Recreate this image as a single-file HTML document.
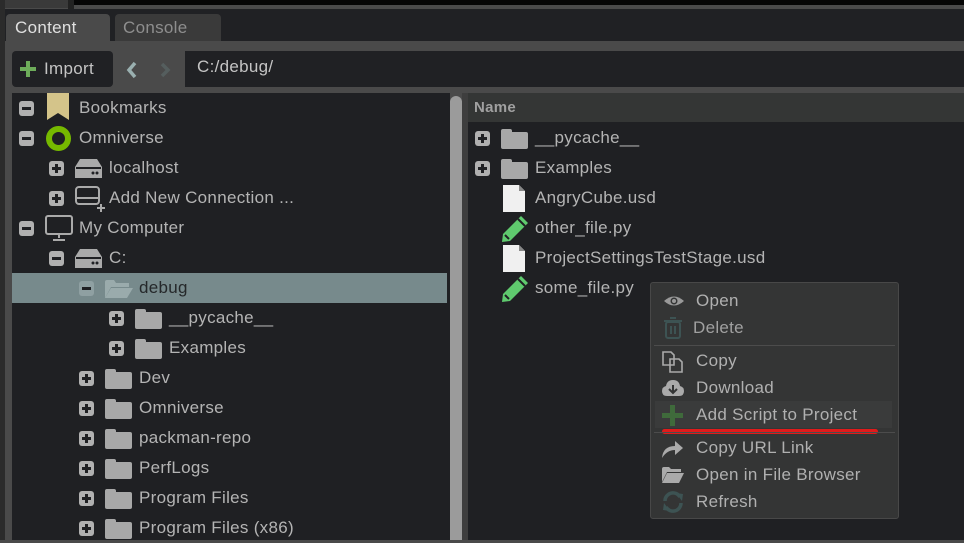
<!DOCTYPE html>
<html><head><style>
*{margin:0;padding:0;box-sizing:border-box}
body{width:964px;height:540px;overflow:hidden;background:#4a4a4a;font-family:"Liberation Sans",sans-serif;color:#b4b4b4;position:relative;font-size:17px;letter-spacing:0.3px}
.a{position:absolute}
.row{position:absolute;height:30px;line-height:30px;white-space:nowrap}
.pm{position:absolute;width:15px;height:15px;background:#b0b0b0;border-radius:3px;top:8px}
.pm:before{content:"";position:absolute;left:3px;top:6px;width:9px;height:3px;background:#1f2023}
.pm.p:after{content:"";position:absolute;left:6px;top:3px;width:3px;height:9px;background:#1f2023}
.fold{position:absolute;width:27px;height:20px;top:6px}
.fold:before{content:"";position:absolute;left:0;top:0;width:11px;height:5px;background:#a8a8a8;border-radius:2px 2px 0 0}
.fold:after{content:"";position:absolute;left:0;top:3px;width:27px;height:17px;background:#a8a8a8;border-radius:2px}
.t{position:absolute}
.mi{position:absolute;left:0;width:248px;height:27px;line-height:27px;font-size:17px;color:#b0b0b0}
.mi span{position:absolute;left:45px}
</style></head><body>
<div class="a" style="left:0;top:0;width:68px;height:8px;background:#3a3a3a"></div>
<div class="a" style="left:68px;top:0;width:6px;height:9px;background:#222"></div>
<div class="a" style="left:74px;top:0;width:890px;height:5px;background:#050505"></div>
<div class="a" style="left:0;top:0;width:5px;height:540px;background:#2b2b2b"></div>
<div class="a" style="left:5px;top:9px;width:959px;height:32px;background:#202124"></div>
<div class="a" style="left:6px;top:14px;width:104px;height:28px;background:#4a4a4a;border-radius:4px 4px 0 0;color:#e0e0e0;padding-left:9px;line-height:28px">Content</div>
<div class="a" style="left:115px;top:14px;width:106px;height:27px;background:#3a3a3a;border-radius:4px 4px 0 0;color:#8e8e8e;padding-left:8px;line-height:27px">Console</div>
<div class="a" style="left:12px;top:51px;width:101px;height:36px;background:#202124;border-radius:4px;line-height:36px;padding-left:32px;color:#c4c4c4">Import</div>
<div class="a" style="left:20px;top:67px;width:16px;height:4px;background:#6dac5a"></div>
<div class="a" style="left:26px;top:61px;width:4px;height:16px;background:#6dac5a"></div>
<svg class="a" style="left:124px;top:60px" width="50" height="20"><path d="M11 3 L5 10 L11 17" stroke="#9ab0b0" stroke-width="3.5" fill="none"/><path d="M38 4 L44 10 L38 16" stroke="#555e5e" stroke-width="3.5" fill="none"/></svg>
<div class="a" style="left:185px;top:51px;width:779px;height:36px;background:#202124;line-height:32px;padding-left:12px;color:#c4c4c4">C:/debug/</div>
<div class="a" style="left:12px;top:93px;width:438px;height:447px;background:#1f2023"></div>
<div class="a" style="left:450px;top:96px;width:12px;height:444px;background:#9b9b9b;border-radius:6px 6px 0 0"></div>
<div class="a" style="left:462px;top:93px;width:6px;height:447px;background:#3e3e3e"></div>
<div class="a" style="left:468px;top:93px;width:496px;height:447px;background:#1f2023"></div>
<div class="a" style="left:468px;top:93px;width:496px;height:29px;background:#343635;color:#a0a0a0;font-size:15px;font-weight:bold;line-height:29px;padding-left:6px">Name</div>

<!-- tree -->
<div class="row" style="left:12px;top:93px;width:438px"><div class="pm" style="left:7px"></div>
<svg class="t" style="left:35px;top:0" width="22" height="27"><path d="M0 0H22V27L11 20L0 27Z" fill="#d4c48a"/></svg><span class="t" style="left:67px">Bookmarks</span></div>
<div class="row" style="left:12px;top:123px;width:438px"><div class="pm" style="left:7px"></div>
<div class="t" style="left:34px;top:3px;width:25px;height:25px;border-radius:50%;border:6px solid #76b900"></div><span class="t" style="left:67px">Omniverse</span></div>
<div class="row" style="left:12px;top:153px;width:438px"><div class="pm p" style="left:37px"></div>
<svg class="t" style="left:63px;top:6px" width="27" height="19"><path d="M5 0H22L27 8V19H0V8Z" fill="#aaa"/><rect x="1" y="8" width="25" height="2" fill="#1f2023"/><circle cx="18" cy="14" r="1.5" fill="#1f2023"/><circle cx="22" cy="14" r="1.5" fill="#1f2023"/></svg><span class="t" style="left:97px">localhost</span></div>
<div class="row" style="left:12px;top:183px;width:438px"><div class="pm p" style="left:37px"></div>
<svg class="t" style="left:63px;top:3px" width="30" height="26"><rect x="1" y="1" width="23" height="17" rx="3" fill="none" stroke="#aaa" stroke-width="2"/><rect x="2" y="11" width="21" height="2" fill="#aaa"/><path d="M26 18v8M22 22h8" stroke="#aaa" stroke-width="2"/></svg><span class="t" style="left:97px">Add New Connection ...</span></div>
<div class="row" style="left:12px;top:213px;width:438px"><div class="pm" style="left:7px"></div>
<svg class="t" style="left:33px;top:2px" width="28" height="26"><rect x="1" y="1" width="26" height="18" rx="2" fill="none" stroke="#aaa" stroke-width="2"/><path d="M14 19v4M8 25h12" stroke="#aaa" stroke-width="2"/></svg><span class="t" style="left:67px">My Computer</span></div>
<div class="row" style="left:12px;top:243px;width:438px"><div class="pm" style="left:37px"></div>
<svg class="t" style="left:63px;top:6px" width="27" height="19"><path d="M5 0H22L27 8V19H0V8Z" fill="#aaa"/><rect x="1" y="8" width="25" height="2" fill="#1f2023"/><circle cx="18" cy="14" r="1.5" fill="#1f2023"/><circle cx="22" cy="14" r="1.5" fill="#1f2023"/></svg><span class="t" style="left:97px">C:</span></div>
<div class="row" style="left:12px;top:273px;width:435px;background:#778a8c"><div class="pm" style="left:67px;background:#8fa0a2"></div>
<svg class="t" style="left:93px;top:7px" width="28" height="18"><path d="M0 2Q0 0 2 0H9L11 3H24V7H6L0 18Z" fill="#9aabac"/><path d="M6 8H28L22 18H0Z" fill="#9aabac"/></svg><span class="t" style="left:127px;color:#25282a">debug</span></div>
<div class="row" style="left:12px;top:303px"><div class="pm p" style="left:97px"></div><div class="fold" style="left:123px"></div><span class="t" style="left:157px">__pycache__</span></div>
<div class="row" style="left:12px;top:333px"><div class="pm p" style="left:97px"></div><div class="fold" style="left:123px"></div><span class="t" style="left:157px">Examples</span></div>
<div class="row" style="left:12px;top:363px"><div class="pm p" style="left:67px"></div><div class="fold" style="left:93px"></div><span class="t" style="left:127px">Dev</span></div>
<div class="row" style="left:12px;top:393px"><div class="pm p" style="left:67px"></div><div class="fold" style="left:93px"></div><span class="t" style="left:127px">Omniverse</span></div>
<div class="row" style="left:12px;top:423px"><div class="pm p" style="left:67px"></div><div class="fold" style="left:93px"></div><span class="t" style="left:127px">packman-repo</span></div>
<div class="row" style="left:12px;top:453px"><div class="pm p" style="left:67px"></div><div class="fold" style="left:93px"></div><span class="t" style="left:127px">PerfLogs</span></div>
<div class="row" style="left:12px;top:483px"><div class="pm p" style="left:67px"></div><div class="fold" style="left:93px"></div><span class="t" style="left:127px">Program Files</span></div>
<div class="row" style="left:12px;top:513px"><div class="pm p" style="left:67px"></div><div class="fold" style="left:93px"></div><span class="t" style="left:127px">Program Files (x86)</span></div>

<!-- right list -->
<div class="row" style="left:468px;top:123px"><div class="pm p" style="left:7px"></div><div class="fold" style="left:33px"></div><span class="t" style="left:67px">__pycache__</span></div>
<div class="row" style="left:468px;top:153px"><div class="pm p" style="left:7px"></div><div class="fold" style="left:33px"></div><span class="t" style="left:67px">Examples</span></div>
<div class="row" style="left:468px;top:183px"><svg class="t" style="left:35px;top:2px" width="23" height="27"><path d="M0 0H16L22 6V27H0Z" fill="#f0f0f0"/><path d="M16 0V6H22" fill="#888"/></svg><span class="t" style="left:67px">AngryCube.usd</span></div>
<div class="row" style="left:468px;top:213px"><svg class="t" style="left:33px;top:2px" width="28" height="28"><path d="M20 1L27 8L9 26L1 27L2 19Z" fill="#5fca6e"/><path d="M17 4L24 11M4 20L8 24" stroke="#1f2023" stroke-width="2"/></svg><span class="t" style="left:67px">other_file.py</span></div>
<div class="row" style="left:468px;top:243px"><svg class="t" style="left:35px;top:2px" width="23" height="27"><path d="M0 0H16L22 6V27H0Z" fill="#f0f0f0"/><path d="M16 0V6H22" fill="#888"/></svg><span class="t" style="left:67px">ProjectSettingsTestStage.usd</span></div>
<div class="row" style="left:468px;top:273px"><svg class="t" style="left:33px;top:2px" width="28" height="28"><path d="M20 1L27 8L9 26L1 27L2 19Z" fill="#5fca6e"/><path d="M17 4L24 11M4 20L8 24" stroke="#1f2023" stroke-width="2"/></svg><span class="t" style="left:67px">some_file.py</span></div>

<!-- context menu -->
<div class="a" style="left:650px;top:282px;width:249px;height:237px;background:#343535;border:1px solid #484848;border-radius:3px;overflow:hidden">
<div class="mi" style="top:4px"><svg class="t" style="left:12px;top:8px" width="22" height="12"><path d="M1 6Q11 -3 21 6Q11 15 1 6Z" fill="#999"/><circle cx="11" cy="6" r="3.5" fill="#343535"/><circle cx="11" cy="6" r="2" fill="#999"/></svg><span>Open</span></div>
<div class="mi" style="top:31px;color:#a0a0a0"><svg class="t" style="left:12px;top:3px" width="20" height="22"><rect x="3" y="5" width="14" height="16" rx="2" fill="none" stroke="#3d5353" stroke-width="2"/><path d="M1 4H19M7 1H13M8 9V17M12 9V17" stroke="#3d5353" stroke-width="2"/></svg><span style="left:42px">Delete</span></div>
<div class="a" style="left:3px;top:62px;width:241px;height:1px;background:#4c4c4c"></div>
<div class="mi" style="top:64px"><svg class="t" style="left:11px;top:4px" width="22" height="22"><path d="M1 1H9L12 4V14H1Z M8 8H17L20 11V21H8Z" fill="none" stroke="#aaa" stroke-width="1.6"/></svg><span>Copy</span></div>
<div class="mi" style="top:91px"><svg class="t" style="left:11px;top:5px" width="22" height="17"><path d="M5 17Q0 17 0 12Q0 8 4 7Q5 1 11 1Q17 1 18 7Q22 8 22 12Q22 17 17 17Z" fill="#aaa"/><path d="M11 6V13M7 10L11 14L15 10" stroke="#343535" stroke-width="2" fill="none"/></svg><span>Download</span></div>
<div class="mi" style="top:118px;left:4px;width:237px;background:#3a3b3b"><div class="t" style="left:7px;top:12px;width:21px;height:5px;background:#3f6a3b"></div><div class="t" style="left:15px;top:4px;width:5px;height:21px;background:#3f6a3b"></div><span style="left:41px">Add Script to Project</span></div>
<div class="a" style="left:11px;top:146px;width:216px;height:5px;background:#e01b1b;border-radius:3px"></div>
<div class="a" style="left:3px;top:149px;width:241px;height:1px;background:#4c4c4c"></div>
<div class="mi" style="top:151px"><svg class="t" style="left:11px;top:4px" width="22" height="20"><path d="M0 20Q1 8 13 8V3L21 10L13 17V12Q5 12 0 20Z" fill="#aaa"/></svg><span>Copy URL Link</span></div>
<div class="mi" style="top:178px"><svg class="t" style="left:11px;top:6px" width="22" height="16"><path d="M0 2Q0 0 2 0H7L9 2H19V5H5L0 15Z" fill="#aaa"/><path d="M5 6H22L17 16H0Z" fill="#aaa"/></svg><span>Open in File Browser</span></div>
<div class="mi" style="top:205px"><svg class="t" style="left:11px;top:3px" width="22" height="22"><path d="M3 10A8 8 0 0 1 18 6M19 12A8 8 0 0 1 4 16" stroke="#3d5353" stroke-width="3.5" fill="none"/><path d="M14 2L21 3L20 10Z M8 20L1 19L2 12Z" fill="#3d5353"/></svg><span>Refresh</span></div>
</div>
</body></html>
